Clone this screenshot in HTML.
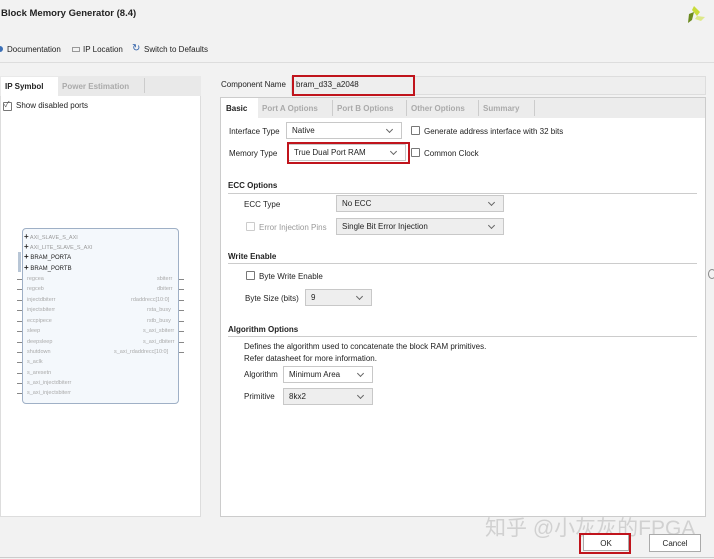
<!DOCTYPE html>
<html><head><meta charset="utf-8"><style>
*{box-sizing:border-box;margin:0;padding:0}
body{width:714px;height:559px;background:#f2f2f2;font-family:"Liberation Sans","Noto Sans CJK SC",sans-serif;font-size:8px;color:#222;position:relative;overflow:hidden}
.a{position:absolute;white-space:nowrap}
.sel{position:absolute;border:1px solid #c8c8c8;background:#fff;height:17px;padding:3px 5px;font-size:8px}
.sel.g{background:#eeeeee}
.sel:after{content:"";position:absolute;right:9px;top:4px;width:4px;height:4px;border-right:1px solid #666;border-bottom:1px solid #666;transform:rotate(45deg)}
.cb{position:absolute;width:9px;height:9px;border:1px solid #777;background:#fff;border-radius:1px}
.red{position:absolute;border:2px solid #c0141c}
.hr{position:absolute;height:1px;background:#ccc}
.port{position:absolute;font-size:5.5px;color:#aaa}
.tick{position:absolute;height:1px;width:5px;background:#888}
</style></head><body>
<div class="a" style="left:1px;top:8px;font-size:9.5px;font-weight:bold">Block Memory Generator (8.4)</div>
<svg class="a" style="left:684px;top:4px" width="22" height="20"><polygon points="10,2 16,8 13,12 8,6" fill="#c9dc3a"/><polygon points="13,12 21,13 17,17 11,15" fill="#dde88a"/><polygon points="5,10 10,8 8,16 4,19" fill="#6b8a1e"/></svg>
<div class="a" style="left:-3px;top:46px;width:6px;height:6px;border-radius:50%;background:#3b6fb6"></div>
<div class="a" style="left:7px;top:45px">Documentation</div>
<div class="a" style="left:72px;top:47px;width:8px;height:5px;border:1px solid #999"></div>
<div class="a" style="left:83px;top:45px">IP Location</div>
<div class="a" style="left:132px;top:43px;font-size:10px;color:#2e5fa8">↻</div>
<div class="a" style="left:144px;top:45px">Switch to Defaults</div>
<div class="hr" style="left:0;top:62px;width:714px;background:#ddd"></div>
<!-- left panel -->
<div class="a" style="left:0;top:76px;width:201px;height:441px;background:#fff;border:1px solid #ddd"></div>
<div class="a" style="left:0;top:76px;width:201px;height:20px;background:#e9e9e9"></div>
<div class="a" style="left:1px;top:77px;width:57px;height:19px;background:#fff"></div>
<div class="a" style="left:5px;top:82px;font-weight:bold">IP Symbol</div>
<div class="a" style="left:62px;top:82px;font-weight:bold;color:#aaa">Power Estimation</div>
<div class="a" style="left:144px;top:78px;width:1px;height:15px;background:#ccc"></div>
<div class="cb" style="left:3px;top:102px"></div><div class="a" style="left:4px;top:99px;font-size:8px;color:#555">✓</div>
<div class="a" style="left:16px;top:101px">Show disabled ports</div>
<div class="a" style="left:22px;top:228px;width:157px;height:176px;background:#f4f8fc;border:1px solid #9fb0c6;border-radius:4px"></div>
<div class="a" style="left:18px;top:252px;width:3px;height:20px;background:#b8c6d6"></div>
<div class="port" style="left:24px;top:232px;color:#999"><b style="color:#333;font-size:8px">+</b> AXI_SLAVE_S_AXI</div>
<div class="port" style="left:24px;top:242px;color:#999"><b style="color:#333;font-size:8px">+</b> AXI_LITE_SLAVE_S_AXI</div>
<div class="port" style="left:24px;top:252px;color:#222;font-size:6px"><b style="font-size:8px">+</b> BRAM_PORTA</div>
<div class="port" style="left:24px;top:263px;color:#222;font-size:6px"><b style="font-size:8px">+</b> BRAM_PORTB</div>
<div class="port" style="left:27px;top:276px">regcea</div><div class="port" style="left:27px;top:286px">regceb</div>
<div class="port" style="left:27px;top:297px">injectdbiterr</div><div class="port" style="left:27px;top:307px">injectsbiterr</div>
<div class="port" style="left:27px;top:318px">eccpipece</div><div class="port" style="left:27px;top:328px">sleep</div>
<div class="port" style="left:27px;top:339px">deepsleep</div><div class="port" style="left:27px;top:349px">shutdown</div>
<div class="port" style="left:27px;top:359px">s_aclk</div><div class="port" style="left:27px;top:370px">s_aresetn</div>
<div class="port" style="left:27px;top:380px">s_axi_injectdbiterr</div><div class="port" style="left:27px;top:390px">s_axi_injectsbiterr</div>
<div class="port" style="left:157px;top:276px">sbiterr</div><div class="port" style="left:157px;top:286px">dbiterr</div>
<div class="port" style="left:131px;top:297px">rdaddrecc[10:0]</div><div class="port" style="left:147px;top:307px">rsta_busy</div>
<div class="port" style="left:147px;top:318px">rstb_busy</div><div class="port" style="left:143px;top:328px">s_axi_sbiterr</div>
<div class="port" style="left:143px;top:339px">s_axi_dbiterr</div><div class="port" style="left:114px;top:349px">s_axi_rdaddrecc[10:0]</div>
<div class="tick" style="left:17px;top:279px"></div><div class="tick" style="left:17px;top:289px"></div><div class="tick" style="left:17px;top:300px"></div><div class="tick" style="left:17px;top:310px"></div><div class="tick" style="left:17px;top:321px"></div><div class="tick" style="left:17px;top:331px"></div><div class="tick" style="left:17px;top:342px"></div><div class="tick" style="left:17px;top:352px"></div><div class="tick" style="left:17px;top:362px"></div><div class="tick" style="left:17px;top:373px"></div><div class="tick" style="left:17px;top:383px"></div><div class="tick" style="left:17px;top:393px"></div>
<div class="tick" style="left:179px;top:279px"></div><div class="tick" style="left:179px;top:289px"></div><div class="tick" style="left:179px;top:300px"></div><div class="tick" style="left:179px;top:310px"></div><div class="tick" style="left:179px;top:321px"></div><div class="tick" style="left:179px;top:331px"></div><div class="tick" style="left:179px;top:342px"></div><div class="tick" style="left:179px;top:352px"></div>
<!-- right panel -->
<div class="a" style="left:221px;top:80px">Component Name</div>
<div class="a" style="left:291px;top:76px;width:415px;height:19px;background:#eee;border:1px solid #ddd"></div>
<div class="a" style="left:296px;top:80px">bram_d33_a2048</div>
<div class="red" style="left:292px;top:75px;width:123px;height:21px"></div>
<div class="a" style="left:220px;top:97px;width:486px;height:420px;background:#fff;border:1px solid #ccc"></div>
<div class="a" style="left:221px;top:98px;width:484px;height:20px;background:#ececec"></div>
<div class="a" style="left:221px;top:98px;width:37px;height:21px;background:#fff"></div>
<div class="a" style="left:226px;top:104px;font-weight:bold">Basic</div>
<div class="a" style="left:262px;top:104px;font-weight:bold;color:#aaa">Port A Options</div>
<div class="a" style="left:332px;top:100px;width:1px;height:16px;background:#ccc"></div>
<div class="a" style="left:337px;top:104px;font-weight:bold;color:#aaa">Port B Options</div>
<div class="a" style="left:406px;top:100px;width:1px;height:16px;background:#ccc"></div>
<div class="a" style="left:411px;top:104px;font-weight:bold;color:#aaa">Other Options</div>
<div class="a" style="left:478px;top:100px;width:1px;height:16px;background:#ccc"></div>
<div class="a" style="left:483px;top:104px;font-weight:bold;color:#aaa">Summary</div>
<div class="a" style="left:534px;top:100px;width:1px;height:16px;background:#ccc"></div>
<div class="a" style="left:229px;top:127px">Interface Type</div>
<div class="sel" style="left:286px;top:122px;width:116px">Native</div>
<div class="cb" style="left:411px;top:126px"></div><div class="a" style="left:424px;top:127px">Generate address interface with 32 bits</div>
<div class="a" style="left:229px;top:149px">Memory Type</div>
<div class="sel" style="left:288px;top:144px;width:118px">True Dual Port RAM</div>
<div class="red" style="left:287px;top:142px;width:123px;height:22px"></div>
<div class="cb" style="left:411px;top:148px"></div><div class="a" style="left:424px;top:149px">Common Clock</div>
<div class="a" style="left:228px;top:181px;font-weight:bold">ECC Options</div>
<div class="hr" style="left:228px;top:193px;width:469px"></div>
<div class="a" style="left:244px;top:200px">ECC Type</div>
<div class="sel g" style="left:336px;top:195px;width:168px">No ECC</div>
<div class="cb" style="left:246px;top:222px;border-color:#ccc"></div><div class="a" style="left:259px;top:223px;color:#999">Error Injection Pins</div>
<div class="sel g" style="left:336px;top:218px;width:168px">Single Bit Error Injection</div>
<div class="a" style="left:228px;top:252px;font-weight:bold">Write Enable</div>
<div class="hr" style="left:228px;top:263px;width:469px"></div>
<div class="cb" style="left:246px;top:271px"></div><div class="a" style="left:259px;top:272px">Byte Write Enable</div>
<div class="a" style="left:245px;top:294px">Byte Size (bits)</div>
<div class="sel g" style="left:305px;top:289px;width:67px">9</div>
<div class="a" style="left:228px;top:325px;font-weight:bold">Algorithm Options</div>
<div class="hr" style="left:228px;top:336px;width:469px"></div>
<div class="a" style="left:244px;top:342px">Defines the algorithm used to concatenate the block RAM primitives.</div>
<div class="a" style="left:244px;top:354px">Refer datasheet for more information.</div>
<div class="a" style="left:244px;top:370px">Algorithm</div>
<div class="sel" style="left:283px;top:366px;width:90px">Minimum Area</div>
<div class="a" style="left:244px;top:392px">Primitive</div>
<div class="sel g" style="left:283px;top:388px;width:90px">8kx2</div>
<div class="a" style="left:708px;top:269px;width:8px;height:10px;border:1px solid #888;border-radius:50%"></div>
<div class="hr" style="left:0;top:557px;width:714px;background:#ccc"></div>
<div class="a" style="left:485px;top:512px;font-size:21px;color:rgba(200,200,200,.8)">知乎 @小灰灰的FPGA</div>
<div class="a" style="left:583px;top:534px;width:46px;height:17px;background:#fff;border:1px solid #aaa;text-align:center;padding-top:4px">OK</div>
<div class="red" style="left:579px;top:533px;width:52px;height:21px"></div>
<div class="a" style="left:649px;top:534px;width:52px;height:18px;background:#fff;border:1px solid #aaa;text-align:center;padding-top:4px">Cancel</div>
</body></html>
